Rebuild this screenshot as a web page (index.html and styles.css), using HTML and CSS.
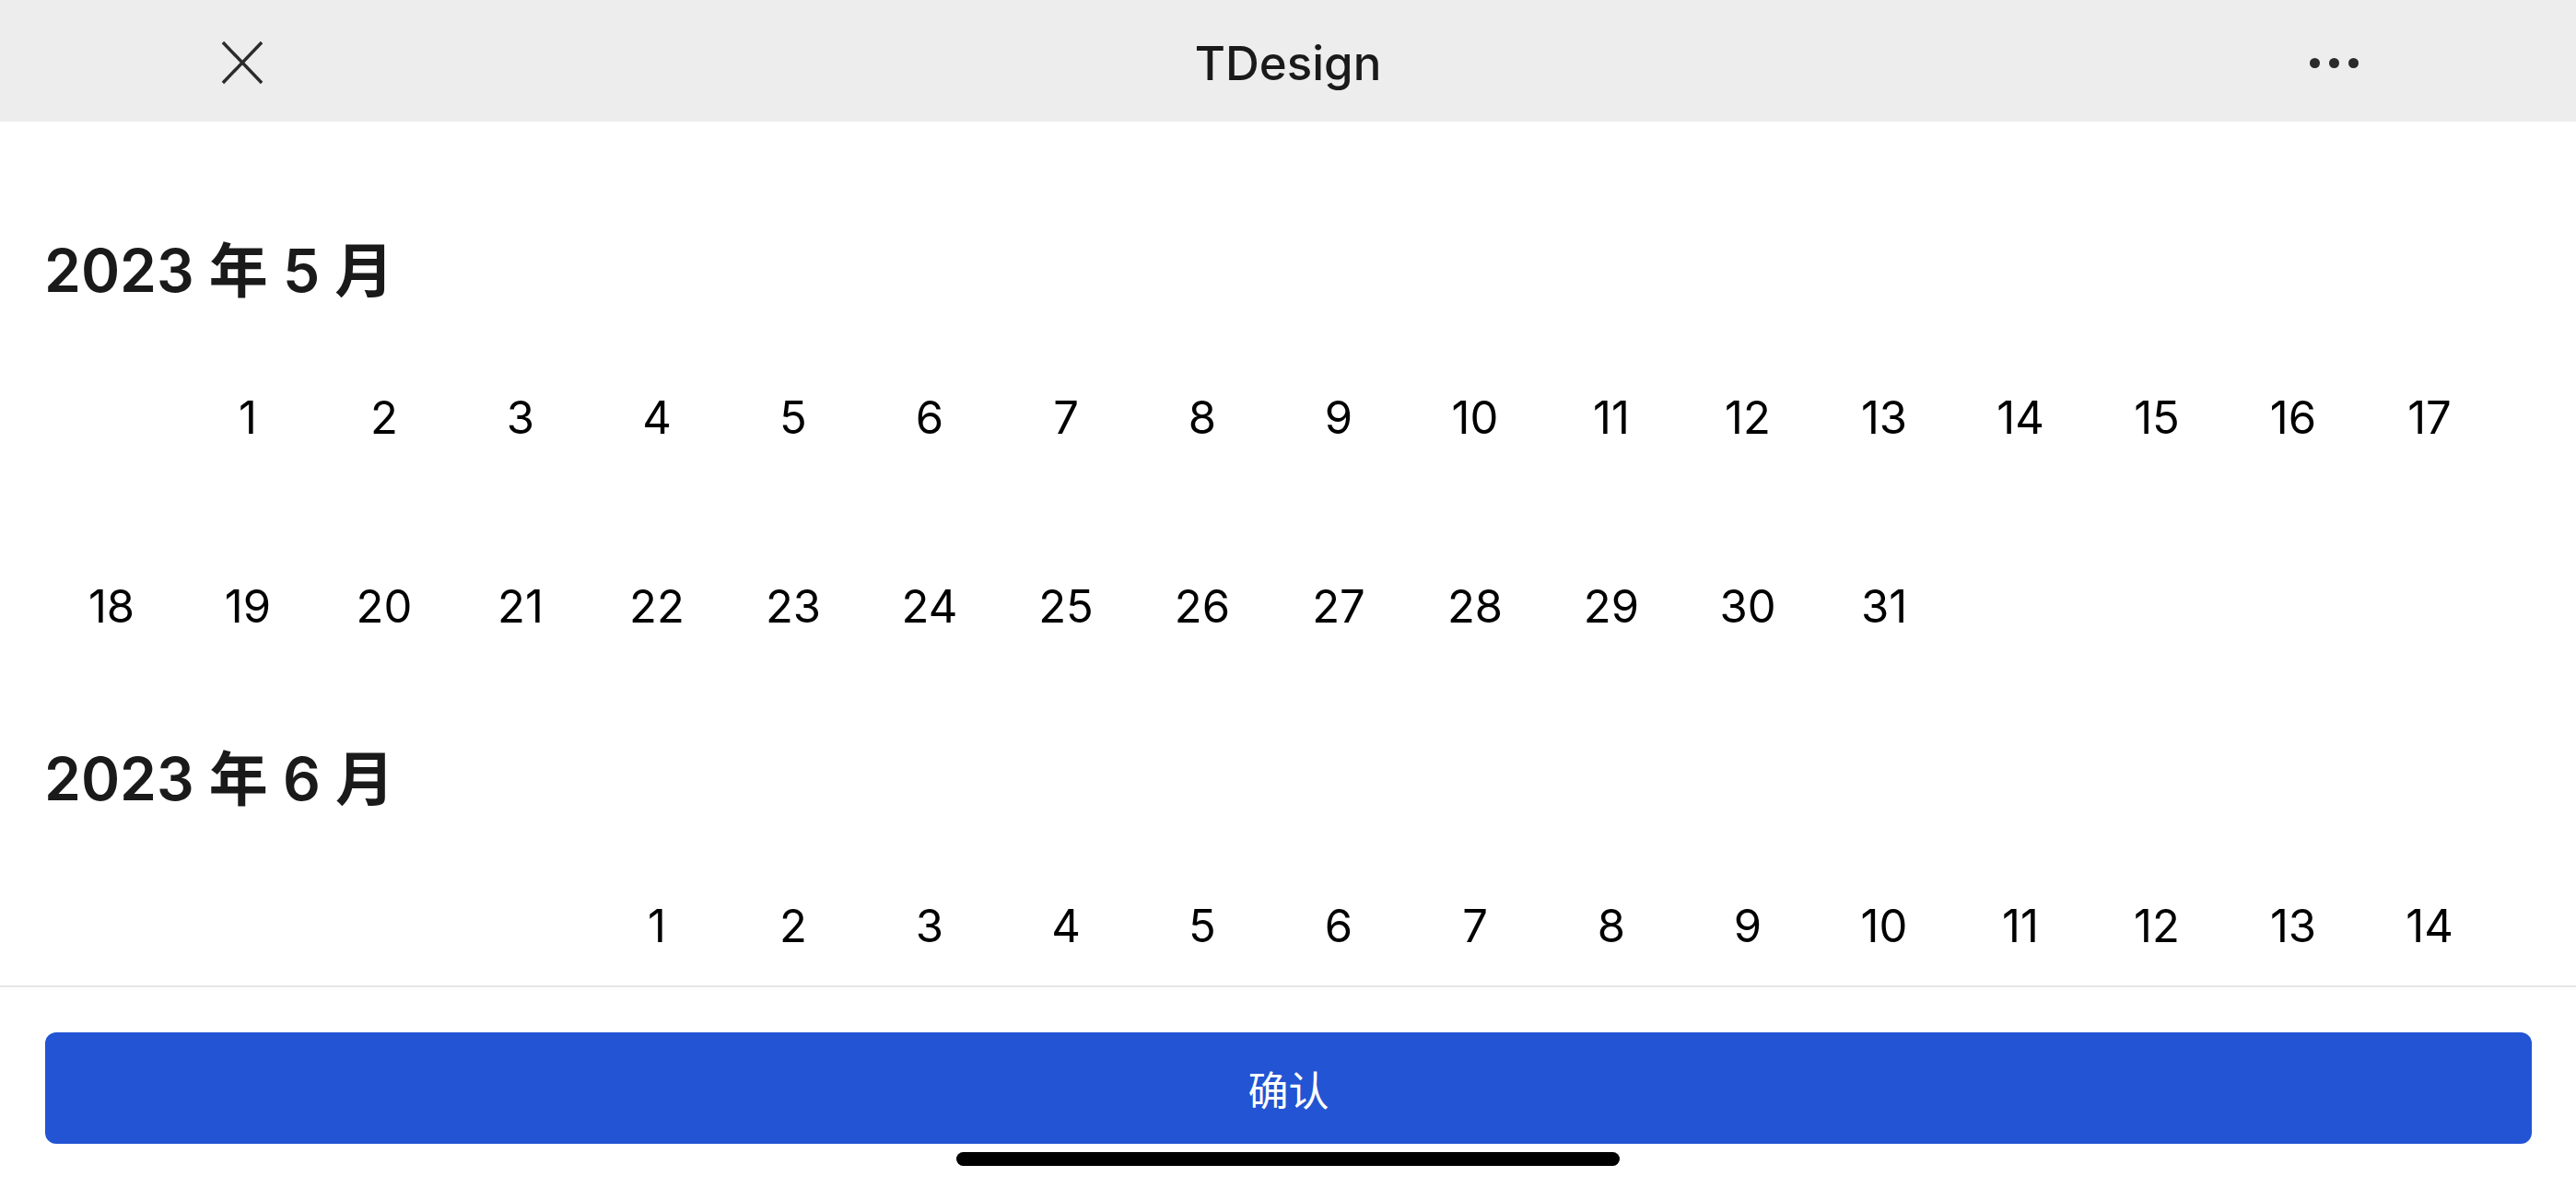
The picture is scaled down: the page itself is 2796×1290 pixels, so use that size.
FILE: index.html
```html
<!DOCTYPE html>
<html lang="zh-CN">
<head>
<meta charset="utf-8">
<title>TDesign</title>
<link rel="stylesheet" href="styles.css">
</head>
<body>
<div class="app">
  <header class="nav">
    <div class="nav-side">
      <svg class="icon-close" viewBox="0 0 48 48" width="48" height="48">
        <line x1="2" y1="1" x2="46" y2="47" />
        <line x1="46" y1="1" x2="2" y2="47" />
      </svg>
    </div>
    <div class="nav-title">TDesign</div>
    <div class="nav-side">
      <div class="dots"><span></span><span></span><span></span></div>
    </div>
  </header>

  <main class="content">
    <section class="month">
      <div class="month-title">2023 年 5 月</div>
      <div class="dates">
        <div class="date"></div>
        <div class="date">1</div><div class="date">2</div><div class="date">3</div><div class="date">4</div>
        <div class="date">5</div><div class="date">6</div><div class="date">7</div><div class="date">8</div>
        <div class="date">9</div><div class="date">10</div><div class="date">11</div><div class="date">12</div>
        <div class="date">13</div><div class="date">14</div><div class="date">15</div><div class="date">16</div>
        <div class="date">17</div><div class="date">18</div><div class="date">19</div><div class="date">20</div>
        <div class="date">21</div><div class="date">22</div><div class="date">23</div><div class="date">24</div>
        <div class="date">25</div><div class="date">26</div><div class="date">27</div><div class="date">28</div>
        <div class="date">29</div><div class="date">30</div><div class="date">31</div>
      </div>
    </section>
    <section class="month">
      <div class="month-title">2023 年 6 月</div>
      <div class="dates">
        <div class="date"></div><div class="date"></div><div class="date"></div><div class="date"></div>
        <div class="date">1</div><div class="date">2</div><div class="date">3</div><div class="date">4</div>
        <div class="date">5</div><div class="date">6</div><div class="date">7</div><div class="date">8</div>
        <div class="date">9</div><div class="date">10</div><div class="date">11</div><div class="date">12</div>
        <div class="date">13</div><div class="date">14</div>
      </div>
    </section>
  </main>

  <footer class="footer">
    <button class="confirm">确认</button>
  </footer>

  <div class="home-indicator"></div>
</div>
</body>
</html>
```

FILE: styles.css
```css
* { box-sizing: border-box; }

html, body {
  margin: 0;
  padding: 0;
  width: 2796px;
  height: 1290px;
  overflow: hidden;
  background: #ffffff;
  font-family: Inter, "Noto Sans CJK SC", "Noto Sans", sans-serif;
}

.app {
  position: relative;
  width: 2796px;
  height: 1290px;
  display: flex;
  flex-direction: column;
}

.nav {
  height: 132px;
  flex: 0 0 132px;
  background: #ededed;
  display: flex;
  align-items: center;
  padding-top: 4px;
}

.nav-side {
  width: 526px;
  display: flex;
  align-items: center;
  justify-content: center;
}

.icon-close {
  width: 46px;
  height: 48px;
}

.icon-close line {
  stroke: #2b2b2b;
  stroke-width: 3.6;
}

.dots {
  display: flex;
  gap: 10px;
}

.dots span {
  width: 11px;
  height: 11px;
  border-radius: 50%;
  background: #2b2b2b;
}

.nav-title {
  flex: 1;
  text-align: center;
  font-size: 51px;
  font-weight: 500;
  color: #1a1a1a;
}

.content {
  flex: 1;
  overflow: hidden;
  padding: 104px 47px 0 47px;
}

.month {
  margin-bottom: 27px;
}

.month-title {
  height: 115px;
  display: flex;
  align-items: center;
  padding-left: 1px;
  font-size: 64px;
  font-weight: 600;
  line-height: 1;
  color: #1a1a1a;
}

.dates {
  display: grid;
  grid-template-columns: repeat(18, 148px);
  grid-auto-rows: 205px;
}

.date {
  display: flex;
  align-items: center;
  justify-content: center;
  font-size: 49px;
  line-height: 1;
  color: #000000;
}

.footer {
  flex: 0 0 220px;
  border-top: 2px solid #e6e6e6;
  padding: 49px 48px 48px 49px;
  background: #ffffff;
}

.confirm {
  display: block;
  width: 100%;
  height: 121px;
  border: none;
  border-radius: 12px;
  background: #2254d3;
  color: #ffffff;
  font-family: "Noto Sans CJK SC", sans-serif;
  font-size: 44px;
  font-weight: 400;
  padding: 0;
}

.home-indicator {
  position: absolute;
  left: 1038px;
  top: 1251px;
  width: 720px;
  height: 15px;
  border-radius: 8px;
  background: #000000;
}
```
